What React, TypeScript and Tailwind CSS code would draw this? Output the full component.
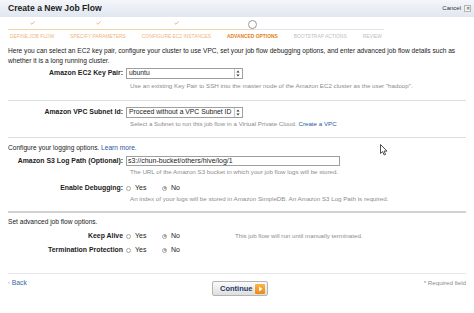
import React from 'react';

const steps = [
  { label: 'DEFINE JOB FLOW', state: 'done' },
  { label: 'SPECIFY PARAMETERS', state: 'done' },
  { label: 'CONFIGURE EC2 INSTANCES', state: 'done' },
  { label: 'ADVANCED OPTIONS', state: 'active' },
  { label: 'BOOTSTRAP ACTIONS', state: 'todo' },
  { label: 'REVIEW', state: 'todo' },
];

function Divider({ className = '' }: { className?: string }) {
  return <div className={`mx-2 h-px bg-[#dedede] ${className}`} />;
}

function SelectArrows() {
  return (
    <span className="flex h-[9px] w-[7px] items-center justify-center border-l border-[#c8c8c8]">
      <svg width="4" height="7" viewBox="0 0 4 7">
        <path d="M2 0.5 L3.6 2.6 L0.4 2.6 Z" fill="#333" />
        <path d="M2 6.5 L3.6 4.4 L0.4 4.4 Z" fill="#333" />
      </svg>
    </span>
  );
}

function FakeSelect({ value, width }: { value: string; width: string }) {
  return (
    <div
      className={`flex h-[11px] ${width} items-center justify-between border border-[#9f9f9f] bg-white pl-[2px] pr-[1px] text-[6.8px] text-[#222]`}
    >
      <span className="whitespace-nowrap">{value}</span>
      <SelectArrows />
    </div>
  );
}

function Radio({ checked }: { checked?: boolean }) {
  return (
    <span className="flex h-[5px] w-[5px] items-center justify-center rounded-full border border-[#a8a8a8] bg-white">
      {checked && <span className="h-[2px] w-[2px] rounded-full bg-[#8a8a8a]" />}
    </span>
  );
}

function YesNo() {
  return (
    <div className="flex items-center text-[7px] text-[#222]">
      <Radio />
      <span className="ml-[4px] w-[27px]">Yes</span>
      <Radio checked />
      <span className="ml-[4px]">No</span>
    </div>
  );
}

function Row({ label, children, className = '' }: { label: string; children: React.ReactNode; className?: string }) {
  return (
    <div className={`flex items-center ${className}`}>
      <div className="w-[123px] whitespace-nowrap pl-2 text-right text-[6.9px] font-bold text-[#222]">{label}</div>
      <div className="ml-[3px] flex items-center">{children}</div>
    </div>
  );
}

function Hint({ children, className = '' }: { children: React.ReactNode; className?: string }) {
  return (
    <div className={`h-[8px] whitespace-nowrap pl-[130px] text-[6.2px] leading-[8px] text-[#8c8c8c] ${className}`}>
      {children}
    </div>
  );
}

export default function App() {
  return (
    <div className="relative h-[313px] w-[474px] overflow-hidden bg-white font-['Liberation_Sans',Arial,sans-serif]">
      {/* title bar */}
      <div className="flex h-[17px] items-center justify-between bg-gradient-to-b from-[#f4f6fa] to-[#e1e7f0] pl-2 pr-[3px]">
        <span className="text-[8.6px] font-bold text-[#1c1c1c]">Create a New Job Flow</span>
        <div className="flex items-center gap-[3px] text-[6px] text-[#333]">
          <span>Cancel</span>
          <span className="flex h-[7px] w-[7px] items-center justify-center border border-[#b5b5b5] bg-[#f4f4f4] text-[5px] leading-none text-[#444]">
            ✕
          </span>
        </div>
      </div>

      {/* progress */}
      <div className="relative h-[27px] px-2">
        <div className="absolute left-2 top-[12px] h-px w-[246px] bg-[#f6d3ad]" />
        <div className="absolute left-[254px] top-[12px] h-px w-[130px] bg-[#e4e4e4]" />
        <div className="relative flex gap-[16px] pl-[2px]">
          {steps.map((s) => (
            <div key={s.label} className="flex flex-col items-center">
              <div className="flex h-[16px] items-center justify-center">
                {s.state === 'done' && (
                  <svg width="5" height="4" viewBox="0 0 5 4" className="mb-[5px]">
                    <path d="M0.5 2 L2 3.3 L4.5 0.5" stroke="#eeb57c" strokeWidth="1" fill="none" />
                  </svg>
                )}
                {s.state === 'active' && (
                  <span className="mt-[-2px] h-[9px] w-[9px] rounded-full border border-[#9a9a9a] bg-white" />
                )}
              </div>
              <span
                className={`whitespace-nowrap text-[4.9px] leading-[7px] ${
                  s.state === 'done'
                    ? 'text-[#efb47a]'
                    : s.state === 'active'
                      ? 'font-bold text-[#e67e14]'
                      : 'text-[#bdbdbd]'
                }`}
              >
                {s.label}
              </span>
            </div>
          ))}
        </div>
      </div>

      {/* intro */}
      <p className="mt-[2px] px-2 text-[6.6px] leading-[10px] text-[#222]">
        Here you can select an EC2 key pair, configure your cluster to use VPC, set your job flow debugging options, and enter advanced job flow details such as whether it is a long running cluster.
      </p>

      <Row label="Amazon EC2 Key Pair:" className="mt-[2px] h-[11px]">
        <FakeSelect value="ubuntu" width="w-[117px]" />
      </Row>
      <Hint className="mt-[3px]">
        Use an existing Key Pair to SSH into the master node of the Amazon EC2 cluster as the user &quot;hadoop&quot;.
      </Hint>

      <Divider className="mt-[10px]" />

      <Row label="Amazon VPC Subnet Id:" className="mt-[6px] h-[11px]">
        <FakeSelect value="Proceed without a VPC Subnet ID" width="w-[117px]" />
      </Row>
      <Hint className="mt-[2px]">
        Select a Subnet to run this job flow in a Virtual Private Cloud.{' '}
        <span className="text-[#2a5a9c]">Create a VPC</span>
      </Hint>

      <Divider className="mt-[9px]" />

      <div className="mt-[5px] h-[10px] px-2 text-[6.6px] leading-[10px] text-[#222]">
        Configure your logging options. <span className="text-[#2a5a9c]">Learn more.</span>
      </div>

      <Row label="Amazon S3 Log Path (Optional):" className="mt-[3px] h-[10px]">
        <div className="flex h-[10px] w-[214px] items-center border border-[#9f9f9f] bg-white pl-[1px] text-[7px] text-[#222]">
          s3://chun-bucket/others/hive/log/1
        </div>
      </Row>
      <Hint className="mt-[2px]">The URL of the Amazon S3 bucket in which your job flow logs will be stored.</Hint>

      <Row label="Enable Debugging:" className="mt-[7px] h-[10px]">
        <YesNo />
      </Row>
      <Hint className="mt-[2px]">
        An index of your logs will be stored in Amazon SimpleDB. An Amazon S3 Log Path is required.
      </Hint>

      <div className="mx-2 mt-[8px] h-[2px] bg-[#d2d2d2]" />

      <div className="mt-[4px] h-[10px] px-2 text-[6.6px] leading-[10px] text-[#222]">Set advanced job flow options.</div>

      <Row label="Keep Alive" className="mt-[4px] h-[10px]">
        <YesNo />
        <span className="ml-[55px] whitespace-nowrap text-[6.2px] text-[#8c8c8c]">
          This job flow will run until manually terminated.
        </span>
      </Row>

      <Row label="Termination Protection" className="mt-[4px] h-[10px]">
        <YesNo />
      </Row>

      <Divider className="mt-[18px] bg-[#e8e8e8]" />

      {/* footer */}
      <div className="flex items-start px-2">
        <div className="mt-[4px] flex w-[204px] items-center gap-[2px] text-[6.8px] text-[#3a68a8]">
          <span className="text-[5px] text-[#999]">‹</span>
          <span>Back</span>
        </div>
        <button className="mt-[7px] flex h-[15px] w-[56px] items-center justify-between rounded-[2px] border border-[#b4b4b4] bg-gradient-to-b from-[#fbfbfb] to-[#dedede] pl-[7px] pr-[2px]">
          <span className="text-[7.5px] font-bold text-[#1d3b6b]">Continue</span>
          <span className="flex h-[10px] w-[10px] items-center justify-center rounded-[1px] bg-gradient-to-b from-[#fbb544] to-[#ec8a10]">
            <svg width="5" height="6" viewBox="0 0 5 6">
              <path d="M1 0.5 L4.5 3 L1 5.5 Z" fill="#fff" />
            </svg>
          </span>
        </button>
        <div className="mt-[4px] flex-1 text-right text-[6.2px] text-[#8c8c8c]">* Required field</div>
      </div>

      {/* mouse pointer */}
      <svg className="absolute left-[380px] top-[144px]" width="8" height="12" viewBox="0 0 8 12">
        <path d="M0.5 0.5 L0.5 9.5 L2.6 7.6 L4.2 11 L5.6 10.4 L4.1 7.1 L7 7.1 Z" fill="#fff" stroke="#222" strokeWidth="0.8" />
      </svg>
    </div>
  );
}
